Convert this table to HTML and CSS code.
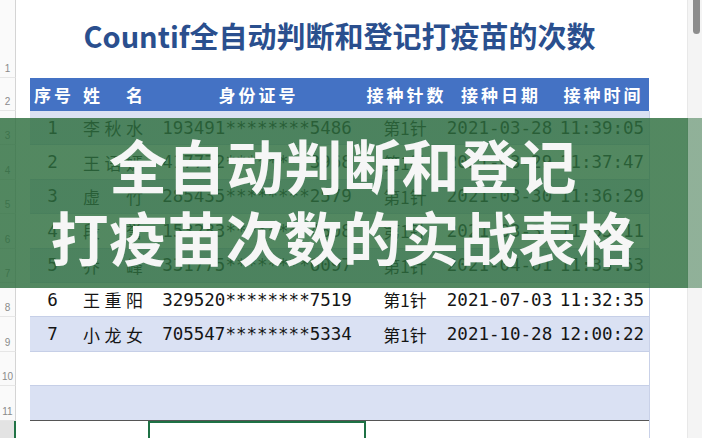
FILE: index.html
```
<!DOCTYPE html>
<html lang="zh">
<head>
<meta charset="utf-8">
<title>Countif</title>
<link rel="stylesheet" href="styles.css">
</head>
<body>
<div class="app">
  <div class="sheet">
    <div class="row r1">
      <div class="rh">1</div><div class="ca"></div>
      <div class="title">Countif全自动判断和登记打疫苗的次数</div>
      <div class="tail blank"></div>
    </div>
    <div class="row head">
      <div class="rh">2</div><div class="ca"></div>
      <div class="cell">序号</div>
      <div class="cell name"><span>姓</span><span>名</span></div>
      <div class="cell">身份证号</div>
      <div class="cell">接种针数</div>
      <div class="cell">接种日期</div>
      <div class="cell">接种时间</div>
      <div class="tail blank"></div>
    </div>
    <div class="row alt">
      <div class="rh">3</div><div class="ca"></div>
      <div class="cell num">1</div>
      <div class="cell name"><span>李</span><span>秋</span><span>水</span></div>
      <div class="cell num">193491********5486</div>
      <div class="cell">第1针</div>
      <div class="cell num">2021-03-28</div>
      <div class="cell num">11:39:05</div>
      <div class="tail"></div>
    </div>
    <div class="row">
      <div class="rh">4</div><div class="ca"></div>
      <div class="cell num">2</div>
      <div class="cell name"><span>王</span><span>语</span><span>嫣</span></div>
      <div class="cell num">417772********3968</div>
      <div class="cell">第1针</div>
      <div class="cell num">2021-03-29</div>
      <div class="cell num">11:37:47</div>
      <div class="tail"></div>
    </div>
    <div class="row alt">
      <div class="rh">5</div><div class="ca"></div>
      <div class="cell num">3</div>
      <div class="cell name"><span>虚</span><span>竹</span></div>
      <div class="cell num">285435********2579</div>
      <div class="cell">第1针</div>
      <div class="cell num">2021-03-30</div>
      <div class="cell num">11:36:29</div>
      <div class="tail"></div>
    </div>
    <div class="row">
      <div class="rh">6</div><div class="ca"></div>
      <div class="cell num">4</div>
      <div class="cell name"><span>段</span><span>誉</span></div>
      <div class="cell num">153283********4808</div>
      <div class="cell">第1针</div>
      <div class="cell num">2021-03-31</div>
      <div class="cell num">11:35:11</div>
      <div class="tail"></div>
    </div>
    <div class="row alt">
      <div class="rh">7</div><div class="ca"></div>
      <div class="cell num">5</div>
      <div class="cell name"><span>乔</span><span>峰</span></div>
      <div class="cell num">331775********6097</div>
      <div class="cell">第1针</div>
      <div class="cell num">2021-04-01</div>
      <div class="cell num">11:33:53</div>
      <div class="tail"></div>
    </div>
    <div class="row">
      <div class="rh">8</div><div class="ca"></div>
      <div class="cell num">6</div>
      <div class="cell name"><span>王</span><span>重</span><span>阳</span></div>
      <div class="cell num">329520********7519</div>
      <div class="cell">第1针</div>
      <div class="cell num">2021-07-03</div>
      <div class="cell num">11:32:35</div>
      <div class="tail"></div>
    </div>
    <div class="row alt">
      <div class="rh">9</div><div class="ca"></div>
      <div class="cell num">7</div>
      <div class="cell name"><span>小</span><span>龙</span><span>女</span></div>
      <div class="cell num">705547********5334</div>
      <div class="cell">第1针</div>
      <div class="cell num">2021-10-28</div>
      <div class="cell num">12:00:22</div>
      <div class="tail"></div>
    </div>
    <div class="row">
      <div class="rh">10</div><div class="ca"></div>
      <div class="cell"></div><div class="cell"></div><div class="cell"></div>
      <div class="cell"></div><div class="cell"></div><div class="cell"></div>
      <div class="tail"></div>
    </div>
    <div class="row alt last">
      <div class="rh">11</div><div class="ca"></div>
      <div class="cell"></div><div class="cell"></div><div class="cell"></div>
      <div class="cell"></div><div class="cell"></div><div class="cell"></div>
      <div class="tail"></div>
    </div>
    <div class="row r12">
      <div class="rh"></div><div class="ca"></div>
      <div class="cell"></div><div class="cell"></div><div class="cell sel"></div>
      <div class="cell"></div><div class="cell"></div><div class="cell"></div>
      <div class="tail"></div>
    </div>
  </div>
  <div class="scroll"><div class="thumb"></div></div>
  <div class="overlay">
    <div class="ov-text">全自动判断和登记<br>打疫苗次数的实战表格</div>
  </div>
</div>
</body>
</html>
```
FILE: styles.css
```
* { box-sizing: border-box; }
body {
  margin: 0;
  background: #fff;
  font-family: "Noto Sans CJK SC", sans-serif;
}
.app {
  position: relative;
  display: flex;
  width: 702px;
  height: 438px;
  overflow: hidden;
}
.sheet {
  width: 687px;
  flex: none;
}
.row {
  display: grid;
  grid-template-columns: 16px 14px 45px 73px 218px 78px 111px 94px 38px;
  height: 34.4px;
}
.rh {
  border-right: 1px solid #d4d4d4;
  border-bottom: 1px solid #e6e6e6;
  background: #fafafa;
  color: #8a8a8a;
  font: 10px "Liberation Sans", sans-serif;
  display: flex;
  align-items: flex-end;
  justify-content: center;
  padding-bottom: 3px;
}
.ca { background: #fff; }
.cell {
  display: flex;
  align-items: center;
  justify-content: center;
  border-bottom: 1px solid #c6cfe7;
  font-size: 17px;
  color: #151515;
  white-space: nowrap;
}
.cell.num {
  font-family: "DejaVu Sans Mono", monospace;
  font-size: 17.5px;
}
.cell.name {
  justify-content: space-between;
  padding: 0 5px 0 8px;
}
.alt .cell { background: #dae1f3; }
.tail { border-left: 1px solid #c9d1e8; }
.tail.blank { border-left: none; }

.r1 { height: 78px; }
.r1 .title {
  grid-column: 3 / 9;
  text-align: center;
  color: #2a4f8e;
  font-size: 29px;
  font-weight: 700;
  line-height: 38px;
  padding-top: 16px;
  white-space: nowrap;
}
.head { height: 33px; }
.head .cell {
  background: #4472c4;
  color: #fff;
  font-weight: 700;
  letter-spacing: 3px;
  border-bottom: none;
  padding-left: 3px;
}
.head .cell.name { padding: 0 5px 0 8px; letter-spacing: 0; }
.last .cell { border-bottom-color: #555; }
.r12 { height: 17px; }
.r12 .rh {
  background: #e3e3e3;
  border-right: 2px solid #217346;
  border-bottom: none;
}
.r12 .cell { border-bottom: none; }
.r12 .cell.sel {
  border: 2px solid #1e7145;
  border-bottom: none;
}

.scroll {
  width: 15px;
  flex: none;
  background: #f4f4f4;
  border-left: 1px solid #e8e8e8;
}
.thumb {
  margin: 0 2px 0 5px;
  height: 34px;
  background: #8d8d8d;
  border-radius: 0 0 4px 4px;
}

.overlay {
  position: absolute;
  left: 0;
  top: 118px;
  width: 702px;
  height: 170px;
  background: linear-gradient(90deg, rgba(45, 110, 62, 0.82) 0 688px, rgba(45, 110, 62, 0.5) 688px);
}
.ov-text {
  color: #f6f6f6;
  font-size: 58px;
  font-weight: 700;
  line-height: 72px;
  text-align: center;
  padding: 10px 16px 0 0;
  letter-spacing: 0.5px;
  white-space: nowrap;
}
```
